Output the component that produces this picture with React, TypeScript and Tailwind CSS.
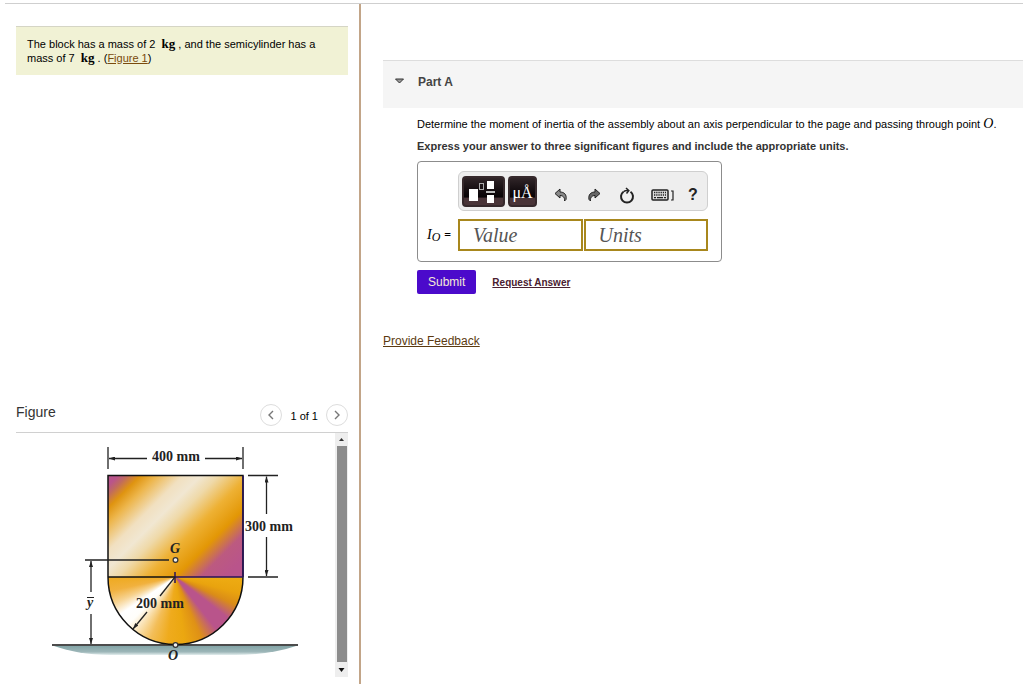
import type { ReactNode } from "react";

function ToolButton({ label, wide, children }: { label: string; wide?: boolean; children: ReactNode }) {
  return (
    <button
      type="button"
      aria-label={label}
      className={`${wide ? "w-10" : "w-[33px]"} flex h-8 items-center justify-center pt-2`}
    >
      {children}
    </button>
  );
}

function DarkButton({ label, wide, children }: { label: string; wide?: boolean; children: ReactNode }) {
  return (
    <button
      type="button"
      aria-label={label}
      className={`${wide ? "w-[43px]" : "w-[29px]"} flex h-[31px] items-center justify-center rounded border-2 border-[#36292c] bg-linear-to-b from-[#302528] via-[#080406] via-70% to-[#493438] to-75% text-white`}
    >
      {children}
    </button>
  );
}

function Toolbar() {
  return (
    <div className="flex h-10 items-center rounded-md border border-[#cfcfcf] bg-[#eeeeee] px-[3px]">
      <DarkButton label="Templates" wide>
        <svg width="31" height="23" viewBox="0 0 31 23">
          <rect x="1" y="9" width="9" height="12" fill="#fff" />
          <rect x="11.500" y="3.500" width="4" height="6" fill="none" stroke="#aaa" />
          <rect x="19" y="1" width="7" height="8" fill="#fff" />
          <path d="M18 12h9" stroke="#bbb" strokeWidth="2" />
          <rect x="19" y="15" width="7" height="8" fill="#fff" />
        </svg>
      </DarkButton>
      <div className="ml-[3px]">
        <DarkButton label="Symbols">
          <span className="pt-1 font-['Liberation_Serif',serif] text-base leading-5">μÅ</span>
        </DarkButton>
      </div>
      <div className="ml-[7px] flex items-center">
        <ToolButton label="Undo">
          <svg width="14" height="14" viewBox="0 0 14 14">
            <path
              d="M1 5.500 6 1v3c4 0 7 2.500 6 7.500L10.500 13C11 9.500 9 7.500 6 7.500V10Z"
              fill="#888"
              stroke="#222"
              strokeLinejoin="round"
            />
          </svg>
        </ToolButton>
        <ToolButton label="Redo">
          <svg width="14" height="14" viewBox="0 0 14 14">
            <path
              d="M13 5.500 8 1v3C4 4 1 6.500 2 11.500L3.500 13C3 9.500 5 7.500 8 7.500V10Z"
              fill="#666"
              stroke="#222"
              strokeLinejoin="round"
            />
          </svg>
        </ToolButton>
        <ToolButton label="Reset">
          <svg width="16" height="17" viewBox="0 0 16 17" fill="none">
            <path d="M11.500 4.700A6 6 0 1 1 4.500 4.700" stroke="#222" strokeWidth="2" />
            <path d="M4.500 4.700Q6.500 3 9.500 3.500M7 1 9.800 3.600 7.500 6.500" stroke="#222" strokeWidth="1.500" />
          </svg>
        </ToolButton>
        <ToolButton label="Keyboard shortcuts" wide>
          <svg width="24" height="13" viewBox="0 0 24 13" fill="none">
            <rect x="1" y="1" width="16" height="10" rx="1" fill="#ddd" stroke="#222" strokeWidth="1.500" />
            <path d="M3 3.500h12M3 6h12" stroke="#222" strokeWidth="1.300" strokeDasharray="1.300 0.900" />
            <path d="M3 8.700h2M6 8.700h6M13 8.700h2" stroke="#222" strokeWidth="1.300" />
            <path d="M20 2h2v9h-2" stroke="#222" strokeWidth="1.200" />
          </svg>
        </ToolButton>
        <button type="button" aria-label="Help" className="w-5 pt-2 text-base font-bold text-[#222]">
          ?
        </button>
      </div>
    </div>
  );
}

function Drawing() {
  return (
    <svg
      width="319"
      height="244"
      viewBox="16 433 319 244"
      role="img"
      aria-label="Figure 1"
      className="font-['Liberation_Serif',serif] text-sm font-bold"
    >
      <defs>
        <linearGradient id="block" gradientUnits="userSpaceOnUse" x1="112" y1="466" x2="224" y2="578">
          <stop offset="0.070" stopColor="#b9548b" />
          <stop offset="0.110" stopColor="#c06a60" />
          <stop offset="0.170" stopColor="#df9410" />
          <stop offset="0.240" stopColor="#edb54a" />
          <stop offset="0.360" stopColor="#f1e0c0" />
          <stop offset="0.440" stopColor="#f1e7d2" />
          <stop offset="0.520" stopColor="#efd9a8" />
          <stop offset="0.650" stopColor="#eeb134" />
          <stop offset="0.780" stopColor="#e39705" />
          <stop offset="0.890" stopColor="#bc5a80" />
          <stop offset="1" stopColor="#b9548b" />
        </linearGradient>
        <linearGradient id="ground" x1="0" y1="0" x2="0" y2="1">
          <stop offset="0" stopColor="#83a5a7" />
          <stop offset="0.650" stopColor="#9db6b8" />
          <stop offset="1" stopColor="#e3eeee" />
        </linearGradient>
        <marker
          id="arrow"
          viewBox="0 0 6 4"
          refX="6"
          refY="2"
          markerWidth="6"
          markerHeight="4"
          markerUnits="userSpaceOnUse"
          orient="auto"
        >
          <path d="M0 0 6 2 0 4Z" fill="#222" />
        </marker>
      </defs>
      <path d="M54 646H296C278 652 258 655 235 655H110C88 655 68 651 54 646Z" fill="url(#ground)" />
      <path d="M52 645H298" stroke="#111" strokeWidth="1.500" />
      <rect x="108" y="475.500" width="135" height="101.500" fill="url(#block)" />
      <foreignObject x="108" y="577" width="135" height="68">
        <div className="h-full w-full rounded-b-full bg-[conic-gradient(from_90deg_at_50%_0%,#eeac13_0deg,#e9a30e_14deg,#da8c18_25deg,#b9548b_38deg,#b9548b_52deg,#df9116_67deg,#eba710_82deg,#efab1d_97deg,#f3be59_112deg,#fffefa_135deg,#ffffff_146deg,#f7d391_157deg,#f1b13e_168deg,#eeaa20_180deg)]" />
      </foreignObject>
      <path d="M108 577V475.500H243V577A67.500 67.500 0 0 1 108 577" fill="none" stroke="#111" strokeWidth="1.500" />
      <path d="M108 577H175" stroke="#111" strokeWidth="1.500" />
      <path d="M175 577H243M175 572V583M243 476V577" stroke="#28135c" strokeWidth="1.500" />
      <g stroke="#222" strokeWidth="1.300" fill="none">
        <path d="M108 447V469M243 447V469M248 475.500H278M248 577H278M85 560H169" />
        <path d="M147 458.500H109" markerEnd="url(#arrow)" />
        <path d="M205 458.500H242" markerEnd="url(#arrow)" />
        <path d="M266.500 514V476.500" markerEnd="url(#arrow)" />
        <path d="M266.500 537V576" markerEnd="url(#arrow)" />
        <path d="M91 592V561" markerEnd="url(#arrow)" />
        <path d="M91 614V644" markerEnd="url(#arrow)" />
        <path d="M175 577 160 596" />
        <path d="M147 612 133 629" markerEnd="url(#arrow)" />
      </g>
      <g fill="#eee" stroke="#333" strokeWidth="1.200">
        <circle cx="175.500" cy="560" r="2.400" />
        <circle cx="175.500" cy="645" r="2.400" />
      </g>
      <g fill="#222">
        <text x="152" y="461">400 mm</text>
        <text x="245" y="531">300 mm</text>
        <text x="136" y="608">200 mm</text>
        <text x="170" y="553" className="italic">G</text>
        <text x="87" y="607" className="italic">y</text>
        <text x="168" y="660" className="italic">O</text>
      </g>
      <path d="M87 597.500h7" stroke="#222" />
    </svg>
  );
}

function PagerButton({ label, d }: { label: string; d: string }) {
  return (
    <button
      type="button"
      aria-label={label}
      className="flex h-[22px] w-[22px] items-center justify-center rounded-full border border-[#dddddd] bg-white"
    >
      <svg width="8" height="10" viewBox="0 0 8 10" fill="none" stroke="#777" strokeWidth="1.400">
        <path d={d} />
      </svg>
    </button>
  );
}

function FigurePanel() {
  return (
    <section className="mt-auto mb-[7px]">
      <div className="flex h-9 items-center justify-between border-b border-[#d0d0d0]">
        <h2 className="pb-[6px] text-sm text-[#333]">Figure</h2>
        <div className="flex items-center gap-2 text-[11px] text-black">
          <PagerButton label="Previous figure" d="M6 1 2 5 6 9" />
          <span className="pt-[3px]">1 of 1</span>
          <PagerButton label="Next figure" d="M2 1 6 5 2 9" />
        </div>
      </div>
      <div className="flex">
        <div className="flex-1">
          <Drawing />
        </div>
        <div className="flex w-[13px] flex-col items-center justify-between bg-[#eeeeee]">
          <svg width="13" height="13" viewBox="0 0 13 13">
            <path d="M4 8 6.500 5 9 8Z" fill="#333" />
          </svg>
          <div className="w-[10px] flex-1 bg-[#8c8c8c]" />
          <svg width="13" height="15" viewBox="0 0 13 15">
            <path d="M3.500 6 6.500 10 9.500 6Z" fill="#111" />
          </svg>
        </div>
      </div>
    </section>
  );
}

function AnswerForm() {
  const field =
    "h-8 w-full min-w-0 flex-1 border-2 border-[#a8871d] bg-white px-[13px] font-['Liberation_Serif',serif] text-xl italic text-[#444] placeholder:text-[#555]";

  return (
    <form>
      <div className="w-[305px] rounded border border-[#8c8c8c] pt-[9px] pr-[13px] pb-[10px] pl-[9px]">
        <div className="pl-[31px]">
          <Toolbar />
        </div>
        <div className="mt-2 flex items-center">
          <label
            htmlFor="value"
            className="w-[31px] shrink-0 font-['Liberation_Serif',serif] text-sm leading-4 text-black"
          >
            <i>I</i>
            <sub className="bottom-[-2px] text-xs italic">O</sub>
            <span className="ml-1 text-xs font-bold">=</span>
          </label>
          <div className="flex min-w-0 flex-1 gap-px">
            <input id="value" placeholder="Value" className={field} />
            <input aria-label="Units" placeholder="Units" className={field} />
          </div>
        </div>
      </div>
      <div className="mt-2 flex items-center gap-4">
        <button type="button" className="h-6 rounded-xs bg-[#4b0acb] px-[11px] text-xs text-[#f4e9d6]">
          Submit
        </button>
        <a href="#answer" className="text-[10px] font-bold text-[#4a2030] underline">
          Request Answer
        </a>
      </div>
    </form>
  );
}

function Kg() {
  return <span className="font-['Liberation_Serif',serif] text-[13px] font-bold">kg</span>;
}

export default function App() {
  return (
    <div className="flex min-h-screen bg-white pt-[3px] pb-1 pl-[5px] font-['Liberation_Sans',Arial,sans-serif]">
      <div className="flex flex-1 border-t border-[#cfcfcf]">
        <aside className="flex w-[356px] shrink-0 flex-col border-r-2 border-[#c2a588] px-[11px]">
          <div className="mt-[22px] border-t border-[#d5d5c5] bg-[#f1f2d5] px-[11px] py-[10px] text-[11px] leading-[14px] text-black">
            The block has a mass of 2 &nbsp;
            <Kg /> , and the semicylinder has a mass of 7 &nbsp;
            <Kg /> . (
            <a href="#figure" className="text-[#7a4a0c] underline">
              Figure 1
            </a>
            )
          </div>
          <FigurePanel />
        </aside>

        <main className="min-w-0 flex-1 pt-14 pl-[22px]">
          <div className="flex h-12 items-center border-t border-[#dddddd] bg-[#f5f5f5] pb-[6px] pl-[11px]">
            <svg width="11" height="7" viewBox="0 0 11 7">
              <path d="M1.500 1H9.500L5.500 5Z" fill="#999" stroke="#333" />
            </svg>
            <h2 className="ml-[13px] text-xs font-bold text-[#444]">Part A</h2>
          </div>
          <div className="pl-[34px]">
            <p className="mt-2 text-[11px] leading-4 text-black">
              Determine the moment of inertia of the assembly about an axis perpendicular to the page and passing
              through point <i className="font-['Liberation_Serif',serif] text-sm leading-4">O</i>.
            </p>
            <p className="mt-[6px] mb-[7px] text-[11px] leading-4 font-bold text-[#333]">
              Express your answer to three significant figures and include the appropriate units.
            </p>
            <AnswerForm />
          </div>
          <a href="#feedback" className="mt-[39px] inline-block text-xs leading-4 text-[#5c3a10] underline">
            Provide Feedback
          </a>
        </main>
      </div>
    </div>
  );
}
